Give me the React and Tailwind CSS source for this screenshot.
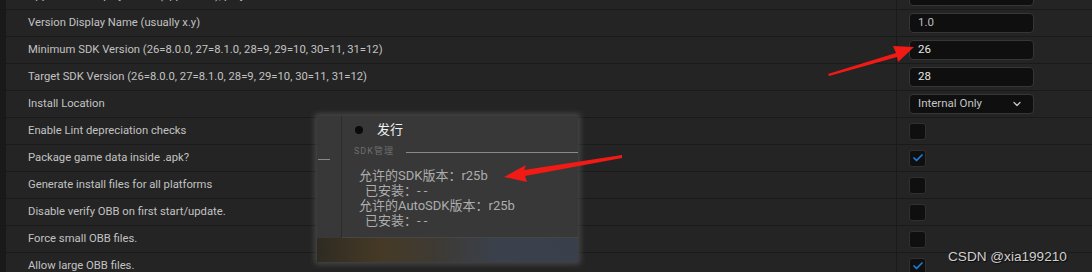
import React from 'react';
import { ChevronDown, Check } from 'lucide-react';

const rows = [
  { label: 'Application Display Name (app_name), project name if blank', type: 'input', value: '' },
  { label: 'Version Display Name (usually x.y)', type: 'input', value: '1.0' },
  { label: 'Minimum SDK Version (26=8.0.0, 27=8.1.0, 28=9, 29=10, 30=11, 31=12)', type: 'input', value: '26', bright: true },
  { label: 'Target SDK Version (26=8.0.0, 27=8.1.0, 28=9, 29=10, 30=11, 31=12)', type: 'input', value: '28', bright: true },
  { label: 'Install Location', type: 'select', value: 'Internal Only' },
  { label: 'Enable Lint depreciation checks', type: 'check', value: false },
  { label: 'Package game data inside .apk?', type: 'check', value: true },
  { label: 'Generate install files for all platforms', type: 'check', value: false },
  { label: 'Disable verify OBB on first start/update.', type: 'check', value: false },
  { label: 'Force small OBB files.', type: 'check', value: false },
  { label: 'Allow large OBB files.', type: 'check', value: true },
];

const Value = ({ row }) => {
  if (row.type === 'input') {
    return (
      <div className={`w-[125px] h-[20px] rounded-[4px] bg-[#0f0f0f] border border-[#363636] flex items-center pl-[8px] text-[11.5px] ${row.bright ? 'text-[#e6e6e6]' : 'text-[#bdbdbd]'}`}>
        {row.value}
      </div>
    );
  }
  if (row.type === 'select') {
    return (
      <div className="w-[125px] h-[20px] rounded-[4px] bg-[#0f0f0f] border border-[#363636] flex items-center justify-between pl-[8px] pr-[10px] text-[11.5px] text-[#c4c4c4]">
        <span>{row.value}</span>
        <ChevronDown size={12} strokeWidth={2.5} className="text-[#c4c4c4]" />
      </div>
    );
  }
  return (
    <div className="w-[17px] h-[17px] rounded-[3px] bg-[#0f0f0f] border border-[#303030] flex items-center justify-center">
      {row.value && <Check size={12} strokeWidth={3.5} className="text-[#1a7fe0]" />}
    </div>
  );
};

const App = () => {
  return (
    <div className="relative w-[1092px] h-[272px] overflow-hidden bg-[#1c1c1c] flex" style={{ fontFamily: 'Roboto, "Noto Sans CJK SC", sans-serif' }}>
      <div className="w-[6px] bg-[#191919]" />
      <div className="flex-1 flex flex-col -mt-[17px]">
        {rows.map((row, i) => (
          <div key={i} className="h-[27px] shrink-0 flex bg-[#242424] border-b border-[#1a1a1a]">
            <div className="w-[891px] flex items-center pl-[22px] text-[11.25px] text-[#c2c2c2] border-r border-[#1a1a1a]">
              {row.label}
            </div>
            <div className="flex-1 flex items-center pl-[12px]">
              <Value row={row} />
            </div>
          </div>
        ))}
      </div>

      {/* tooltip popup */}
      <div className="absolute left-[317px] top-[116px] w-[261px] h-[146px] bg-[#383838] flex flex-col shadow-[0_0_6px_2px_rgba(150,150,150,0.35)]">
        <div className="flex h-[122px]">
          <div className="w-[25px] border-r border-[#2c2c2c] flex flex-col">
            <div className="h-[43px]" />
            <div className="ml-[1px] w-[12px] h-px bg-[#8a8a8a]" />
          </div>
          <div className="flex-1 bg-[#383838] border-b border-[#464646] flex flex-col">
            <div className="flex items-center h-[28px] pl-[13px]">
              <span className="w-[8px] h-[8px] rounded-full bg-[#0a0a0a]" />
              <span className="ml-[14px] text-[13px] text-[#f0f0f0]">发行</span>
            </div>
            <div className="flex items-center h-[16px] pl-[12px]">
              <span className="text-[9px] tracking-[1px] text-[#6e6e6e]">SDK管理</span>
              <div className="flex-1 ml-[12px] h-px bg-[#8a8a8a]" />
            </div>
            <div className="pl-[17px] pt-[8px] text-[13px] leading-[15px] text-[#adadad]">
              <div>允许的SDK版本：r25b</div>
              <div className="pl-[6px]">已安装：- -</div>
              <div>允许的AutoSDK版本：r25b</div>
              <div className="pl-[6px]">已安装：- -</div>
            </div>
          </div>
        </div>
        <div className="flex-1 bg-[linear-gradient(90deg,#2f2b22_0%,#463a26_25%,#3e3a33_45%,#3a414d_70%,#39404b_100%)]" />
      </div>

      {/* annotation arrows */}
      <svg className="absolute left-0 top-0 pointer-events-none" width="1092" height="272">
        <polygon points="828,74 896,53 893,46 914,47 898,62 897,57 829,76" fill="#f21a14" />
        <polygon points="622,155 524,170 526,165 504,177 527,182 525,176 622,158" fill="#f21a14" />
      </svg>

      <div className="absolute left-[948px] top-[247px] text-[13.6px] text-[#d0d0d0] [text-shadow:1px_1px_1px_rgba(0,0,0,0.8)]" style={{ fontFamily: '"Liberation Sans", sans-serif' }}>
        CSDN @xia199210
      </div>
    </div>
  );
};

export default App;
